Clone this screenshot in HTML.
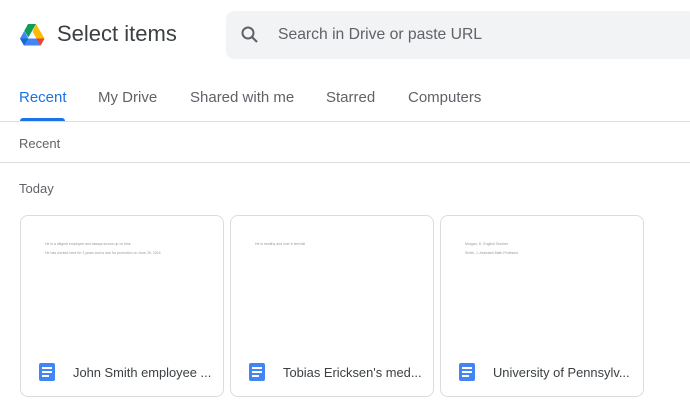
<!DOCTYPE html>
<html><head><style>
*{margin:0;padding:0;box-sizing:border-box}
body{width:690px;height:411px;overflow:hidden;background:#fff;font-family:"Liberation Sans",Arial,sans-serif;position:relative}
.abs{position:absolute}
.title{left:57px;top:21px;font-size:22px;color:#3c4043}
.search{left:226px;top:11px;width:470px;height:48px;background:#f1f3f4;border-radius:8px}
.search span{position:absolute;left:52px;top:15px;font-size:15.7px;color:#5f6368}
.tab{top:89px;font-size:15px;color:#5f6368}
.card{top:215px;width:204px;height:182px;border:1px solid #dadce0;border-radius:8px;background:#fff}
.card .n{position:absolute;left:52px;top:149px;font-size:12.9px;color:#3c4043;white-space:nowrap}
.card .ic{position:absolute;left:18px;top:147px;width:16px;height:18px;background:#4285f4;border-radius:2px}
.card .ic i{position:absolute;left:3px;height:2px;background:#fff}
.card .t{position:absolute;left:24px;font-size:3.5px;color:#999;white-space:nowrap}
</style></head><body>
<svg class="abs" style="left:20px;top:24px" width="25" height="22" viewBox="0 0 25 22">
<polygon points="8,0 16,0 8.3,13.5 4.3,6.8" fill="#0f9d58"/>
<polygon points="16,0 24.5,14.5 20.5,21.5 12.5,7.5" fill="#fbbc04"/>
<polygon points="0,14.5 4.3,7 8.3,14.5 24.5,14.5 20.5,21.5 4,21.5" fill="#4285f4"/>
<polygon points="0,14.5 4,21.5 8.3,14.5" fill="#1967d2"/>
<polygon points="16,14.5 24.5,14.5 20.5,21.5" fill="#ea4335"/>
</svg>
<div class="abs title">Select items</div>
<div class="abs search"><svg class="abs" style="left:14px;top:14px" width="20" height="20" viewBox="0 0 20 20"><circle cx="8" cy="8" r="5.5" fill="none" stroke="#5f6368" stroke-width="2"/><line x1="12" y1="12" x2="17" y2="17" stroke="#5f6368" stroke-width="2.2"/></svg><span>Search in Drive or paste URL</span></div>
<div class="abs tab" style="left:19px;color:#1a73e8">Recent</div>
<div class="abs tab" style="left:98px">My Drive</div>
<div class="abs tab" style="left:190px">Shared with me</div>
<div class="abs tab" style="left:326px">Starred</div>
<div class="abs tab" style="left:408px">Computers</div>
<div class="abs" style="left:20px;top:118px;width:45px;height:3px;background:#1a73e8;border-radius:3px 3px 0 0"></div>
<div class="abs" style="left:0;top:121px;width:690px;height:1px;background:#dadce0"></div>
<div class="abs" style="left:19px;top:136px;font-size:13px;color:#5f6368">Recent</div>
<div class="abs" style="left:0;top:162px;width:690px;height:1px;background:#dadce0"></div>
<div class="abs" style="left:19px;top:181px;font-size:13px;color:#5f6368">Today</div>
<div class="abs card" style="left:20px"><div class="t" style="top:26px">He is a diligent employee and always shows up on time</div><div class="t" style="top:35px">He has worked here for 3 years and is due for promotion on June 25, 2024</div><div class="ic"><i style="top:4px;width:10px"></i><i style="top:8px;width:10px"></i><i style="top:12px;width:7px"></i></div><div class="n">John Smith employee ...</div></div>
<div class="abs card" style="left:230px"><div class="t" style="top:26px">He is healthy and over 6 feet tall</div><div class="ic"><i style="top:4px;width:10px"></i><i style="top:8px;width:10px"></i><i style="top:12px;width:7px"></i></div><div class="n">Tobias Ericksen's med...</div></div>
<div class="abs card" style="left:440px"><div class="t" style="top:26px">Morgan, D. English Teacher</div><div class="t" style="top:35px">Smith, J. Assistant Math Professor</div><div class="ic"><i style="top:4px;width:10px"></i><i style="top:8px;width:10px"></i><i style="top:12px;width:7px"></i></div><div class="n">University of Pennsylv...</div></div>
</body></html>
